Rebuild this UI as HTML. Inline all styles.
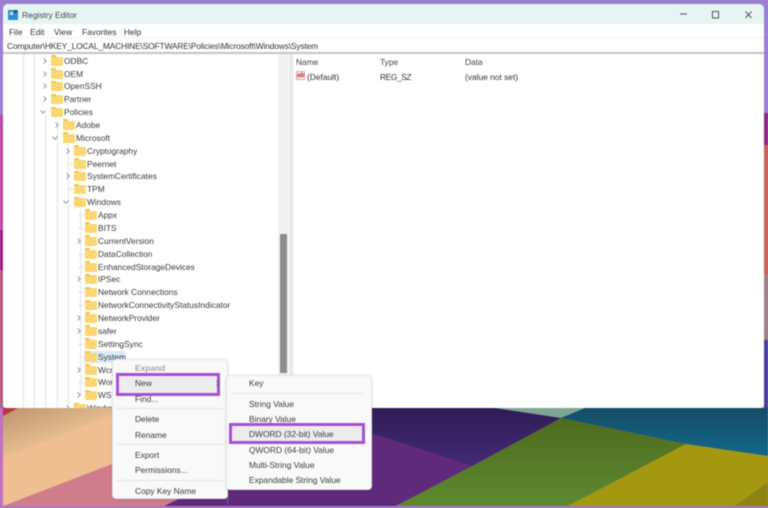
<!DOCTYPE html>
<html lang="en"><head><meta charset="utf-8"><title>Registry Editor</title>
<style>
html,body{margin:0;padding:0;background:#9a80d0}
#s{position:relative;width:768px;height:508px;overflow:hidden;font-family:"Liberation Sans",sans-serif;font-size:8.4px;color:#333;filter:blur(.4px)}
#s>svg{position:absolute;left:0;top:0}
#w{position:absolute;left:3px;top:4px;width:761px;height:404px;background:#fff;border-radius:5px 5px 3px 3px;overflow:hidden}
#w div,#s .a{position:absolute;white-space:nowrap}
.v{width:1px;background:#e2e2e2}
.r{height:13px;line-height:13px;padding-left:13px;color:#3a3a3a}
.f{position:absolute;left:0;top:2px;width:12px;height:9px;background:#f9d773;border-radius:1px}
.f:before{content:"";position:absolute;left:0;top:-1.500px;width:5px;height:2px;background:#f2c24e;border-radius:1px 1px 0 0}
.c{position:absolute;left:-9px;top:4px;width:3px;height:3px;border-top:1px solid #9a9a9a;border-right:1px solid #9a9a9a;transform:rotate(45deg)}
.d{left:-10px;top:3px;transform:rotate(135deg)}
.h{position:absolute;left:-7px;top:6px;width:6px;height:1px;background:#e2e2e2}
.m{position:absolute;background:#f9f9f9;border:1px solid #e4e4e4;border-radius:4px;box-shadow:0 1px 3px rgba(0,0,0,.12)}
.i{position:absolute;white-space:nowrap;line-height:12px;height:12px;color:#3c3c3c}
.l{position:absolute;height:1px;background:#e4e4e4}
</style></head><body><div id="s">
<svg width="768" height="508" viewBox="0 0 768 508">
<defs>
<linearGradient id="t" gradientUnits="userSpaceOnUse" x1="32" y1="398" x2="50" y2="446"><stop offset="0" stop-color="#bb9570"/><stop offset="1" stop-color="#ecc293"/></linearGradient>
<linearGradient id="dp" x1="0" y1="0" x2="0" y2="1"><stop offset="0" stop-color="#2f1c55"/><stop offset="1" stop-color="#432a78"/></linearGradient>
<linearGradient id="bl" x1="0" y1="0" x2="0" y2="1"><stop offset="0" stop-color="#164c66"/><stop offset="1" stop-color="#12688a"/></linearGradient>
<linearGradient id="gr" x1="0" y1="0" x2="0" y2="1"><stop offset="0" stop-color="#4e6b20"/><stop offset="1" stop-color="#5f8a30"/></linearGradient>
</defs>
<rect width="768" height="508" fill="#9a80d0"/>
<rect x="0" y="115" width="3" height="115" fill="#c2459f"/>
<rect x="0" y="230" width="3" height="40" fill="#a0207c"/>
<rect x="0" y="270" width="3" height="140" fill="#bc5a78"/>
<rect x="0" y="408" width="3" height="100" fill="#c56fc0"/>
<rect x="764" y="113" width="4" height="32" fill="#8a2a80"/>
<rect x="764" y="145" width="4" height="130" fill="#c8605c"/>
<rect x="764" y="275" width="4" height="65" fill="#a08088"/>
<rect x="764" y="340" width="4" height="70" fill="#4a3f98"/>
<rect x="3" y="408" width="400" height="100" fill="url(#t)"/>
<polygon points="3,458 115,414 115,470 3,512" fill="#f0bf91"/>
<polygon points="3,506 112,464 160,445 240,408 240,508 3,508" fill="#cf7d8c"/>
<polygon points="3,408 18,408 3,416" fill="#b83545"/>
<rect x="228" y="408" width="340" height="100" fill="#5f2a7c"/>
<polygon points="226,476 160,508 228,508" fill="#5f2a7c"/>
<polygon points="228,408 495,408 561,418 472,466 384,437 340,425 228,410" fill="url(#dp)"/>
<polygon points="495,408 585,408 561,418" fill="#7fa595"/>
<polygon points="585,408 768,408 768,456 686,444 561,418" fill="url(#bl)"/>
<polygon points="561,418 686,444 564,508 392,508 472,466" fill="url(#gr)"/>
<polygon points="686,444 768,456 768,508 564,508" fill="#a3980f"/>
<polygon points="768,482 732,508 768,508" fill="#8e8414"/>
<rect x="0" y="506" width="768" height="2" fill="#a977c4"/>
</svg>

<div id="w">
<div style="left:0;top:0;width:761px;height:20px;background:#e6f5f4"></div>
<div style="left:5px;top:6px;width:10px;height:10px;background:#2a8fd0"></div>
<div style="left:7px;top:8px;width:3px;height:3px;background:#fff;opacity:.75"></div>
<div style="left:11px;top:6px;width:3px;height:3px;background:#14507e"></div>
<div style="left:19px;top:5px;line-height:12px;color:#444">Registry Editor</div>
<svg style="position:absolute;left:670px;top:5px" width="85" height="12" viewBox="0 0 85 12" fill="none" stroke="#555" stroke-width="1"><path d="M7 5H14"/><rect x="39.500" y="2.500" width="6" height="6.500"/><path d="M72.500 2.500L78.500 9M78.500 2.500L72.500 9"/></svg>
<div style="left:6px;top:22px;line-height:12px">File</div>
<div style="left:27px;top:22px;line-height:12px">Edit</div>
<div style="left:51px;top:22px;line-height:12px">View</div>
<div style="left:79px;top:22px;line-height:12px">Favorites</div>
<div style="left:121px;top:22px;line-height:12px">Help</div>
<div style="left:4px;top:36px;line-height:12px;color:#333;letter-spacing:-.14px">Computer\HKEY_LOCAL_MACHINE\SOFTWARE\Policies\Microsoft\Windows\System</div>
<div style="left:0;top:33px;width:761px;height:1px;background:#eee"></div>
<div style="left:0;top:48px;width:761px;height:1.500px;background:#c4c4c4"></div>

<div class="v" style="left:20px;top:50px;height:354px"></div>
<div class="v" style="left:31px;top:50px;height:354px"></div>
<div class="v" style="left:42px;top:110px;height:294px"></div>
<div class="v" style="left:54px;top:122px;height:282px"></div>
<div class="v" style="left:65px;top:134px;height:270px"></div>
<div class="v" style="left:77px;top:205px;height:187px"></div>

<div class="r" style="left:48px;top:50.500px"><i class="c"></i><i class="f"></i>ODBC</div>
<div class="r" style="left:48px;top:63.500px"><i class="c"></i><i class="f"></i>OEM</div>
<div class="r" style="left:48px;top:76.200px"><i class="c"></i><i class="f"></i>OpenSSH</div>
<div class="r" style="left:48px;top:89.100px"><i class="c"></i><i class="f"></i>Partner</div>
<div class="r" style="left:48px;top:102px"><i class="c d"></i><i class="f"></i>Policies</div>
<div class="r" style="left:60px;top:114.900px"><i class="c"></i><i class="f"></i>Adobe</div>
<div class="r" style="left:60px;top:127.700px"><i class="c d"></i><i class="f"></i>Microsoft</div>
<div class="r" style="left:71px;top:140.500px"><i class="c"></i><i class="f"></i>Cryptography</div>
<div class="r" style="left:71px;top:153.500px"><i class="h"></i><i class="f"></i>Peernet</div>
<div class="r" style="left:71px;top:166.300px"><i class="c"></i><i class="f"></i>SystemCertificates</div>
<div class="r" style="left:71px;top:179.200px"><i class="h"></i><i class="f"></i>TPM</div>
<div class="r" style="left:71px;top:192.100px"><i class="c d"></i><i class="f"></i>Windows</div>
<div class="r" style="left:82px;top:204.900px"><i class="h"></i><i class="f"></i>Appx</div>
<div class="r" style="left:82px;top:217.800px"><i class="h"></i><i class="f"></i>BITS</div>
<div class="r" style="left:82px;top:230.700px"><i class="c"></i><i class="f"></i>CurrentVersion</div>
<div class="r" style="left:82px;top:243.500px"><i class="h"></i><i class="f"></i>DataCollection</div>
<div class="r" style="left:82px;top:256.500px"><i class="h"></i><i class="f"></i>EnhancedStorageDevices</div>
<div class="r" style="left:82px;top:269.300px"><i class="c"></i><i class="f"></i>IPSec</div>
<div class="r" style="left:82px;top:282.200px"><i class="h"></i><i class="f"></i>Network Connections</div>
<div class="r" style="left:82px;top:295.100px"><i class="h"></i><i class="f"></i>NetworkConnectivityStatusIndicator</div>
<div class="r" style="left:82px;top:307.900px"><i class="c"></i><i class="f"></i>NetworkProvider</div>
<div class="r" style="left:82px;top:320.800px"><i class="c"></i><i class="f"></i>safer</div>
<div class="r" style="left:82px;top:333.700px"><i class="h"></i><i class="f"></i>SettingSync</div>
<div style="left:81px;top:347px;width:41px;height:12px;background:#d8ecfa"></div>
<div class="r" style="left:82px;top:346.500px"><i class="h"></i><i class="f"></i>System</div>
<div class="r" style="left:82px;top:359.500px"><i class="c"></i><i class="f"></i>WcmSvc</div>
<div class="r" style="left:82px;top:372.300px"><i class="h"></i><i class="f"></i>WorkplaceJoin</div>
<div class="r" style="left:82px;top:385.200px"><i class="c"></i><i class="f"></i>WSDAPI</div>
<div class="r" style="left:71px;top:398.100px"><i class="c"></i><i class="f"></i>Windows NT</div>

<div style="left:275px;top:49.500px;width:11px;height:355px;background:#f1f1f1"></div>
<div style="left:277px;top:230px;width:6.500px;height:139px;background:#8d8d8d"></div>
<div style="left:287px;top:49.500px;width:1px;height:355px;background:#cfcfcf"></div>
<div style="left:289px;top:49.500px;width:1px;height:355px;background:#d8d8d8"></div>

<div style="left:293px;top:52px;line-height:12px;color:#444">Name</div>
<div style="left:377px;top:52px;line-height:12px;color:#444">Type</div>
<div style="left:462px;top:52px;line-height:12px;color:#444">Data</div>
<div style="left:293px;top:67px;width:9px;height:9px;background:#fbeaea;border:.5px solid #d8a8a8;font-size:6.500px;font-weight:bold;line-height:8px;color:#c42020;overflow:hidden;text-align:center;box-sizing:border-box">ab</div>
<div style="left:304px;top:67px;line-height:12px">(Default)</div>
<div style="left:377px;top:67px;line-height:12px;letter-spacing:-.4px">REG_SZ</div>
<div style="left:462px;top:67px;line-height:12px">(value not set)</div>
</div>

<div class="m" style="left:112px;top:359px;width:114px;height:138px"></div>
<div class="a" style="left:116px;top:372.500px;width:98px;height:17px;background:#ececec;border:3px solid #a64fd6"></div>
<div class="i" style="left:135px;top:362px;color:#a5a5a5;font-weight:bold">Expand</div>
<div class="i" style="left:135px;top:377px">New</div>
<svg style="position:absolute;left:215px;top:380px" width="5" height="7" viewBox="0 0 5 7" fill="none" stroke="#666" stroke-width=".8"><path d="M1.500 1L3.500 3.500L1.500 6"/></svg>
<div class="i" style="left:135px;top:392.500px">Find...</div>
<div class="l" style="left:117px;top:408px;width:106px"></div>
<div class="i" style="left:135px;top:413px">Delete</div>
<div class="i" style="left:135px;top:428.500px">Rename</div>
<div class="l" style="left:117px;top:444px;width:106px"></div>
<div class="i" style="left:135px;top:449px">Export</div>
<div class="i" style="left:135px;top:464px">Permissions...</div>
<div class="l" style="left:117px;top:480px;width:106px"></div>
<div class="i" style="left:135px;top:485px">Copy Key Name</div>

<div class="m" style="left:226px;top:375px;width:144px;height:113px"></div>
<div class="i" style="left:249px;top:377px">Key</div>
<div class="l" style="left:231px;top:393px;width:134px"></div>
<div class="i" style="left:249px;top:398px">String Value</div>
<div class="i" style="left:249px;top:413px">Binary Value</div>
<div class="a" style="left:229px;top:423px;width:130px;height:15px;background:#ececec;border:3px solid #a64fd6"></div>
<div class="i" style="left:249px;top:428px">DWORD (32-bit) Value</div>
<div class="i" style="left:249px;top:444px">QWORD (64-bit) Value</div>
<div class="i" style="left:249px;top:459px">Multi-String Value</div>
<div class="i" style="left:249px;top:474px">Expandable String Value</div>
</div></body></html>
